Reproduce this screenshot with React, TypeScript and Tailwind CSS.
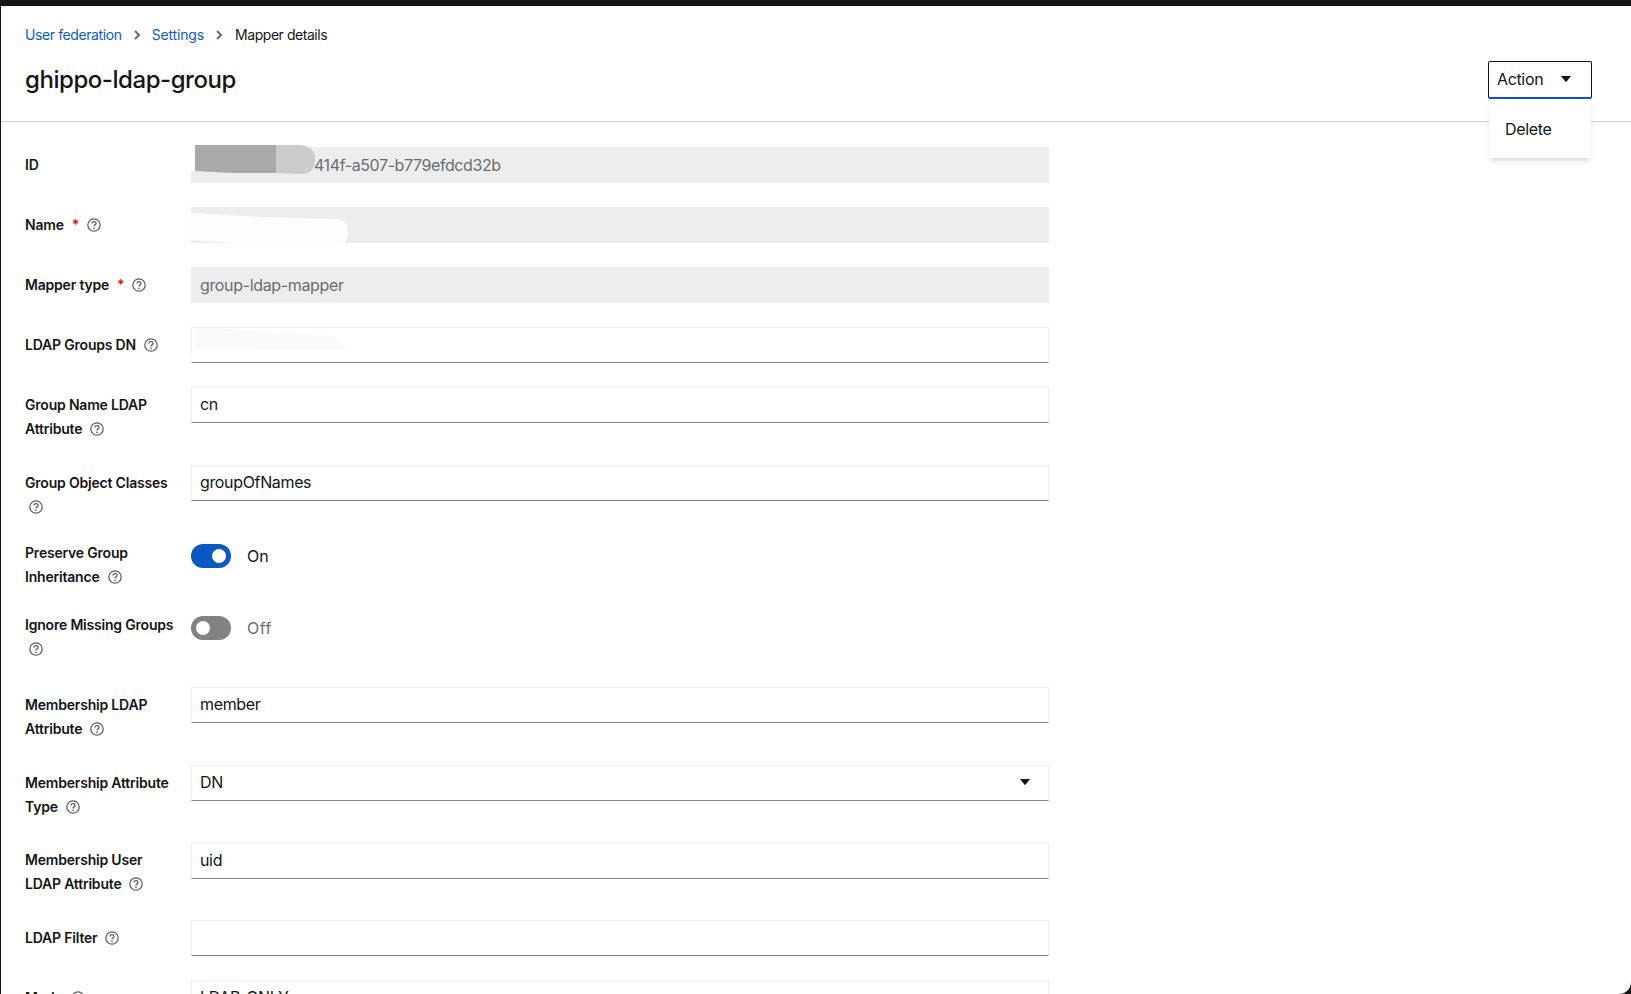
import React from "react";

const Help = () => (
  <svg viewBox="0 0 14 14" className="w-[14px] h-[14px] shrink-0 text-[#5f6266]" fill="none" stroke="currentColor">
    <circle cx="7" cy="7" r="6.2" strokeWidth="1.3" />
    <path d="M5 5.6c0-1.2.9-1.9 2-1.9s2 .7 2 1.8c0 1.4-2 1.4-2 2.9" strokeWidth="1.3" />
    <circle cx="7" cy="10.3" r=".85" fill="currentColor" stroke="none" />
  </svg>
);

const Caret = () => (
  <svg viewBox="0 0 10 6" className="w-[10px] h-[6px]" fill="#151515">
    <path d="M0 0h10L5.6 5.6a.8.8 0 0 1-1.2 0z" />
  </svg>
);

const Chevron = () => (
  <svg viewBox="0 0 6 10" className="w-[6px] h-[10px]" fill="none" stroke="#6a6e73" strokeWidth="2">
    <path d="M1 1l4 4-4 4" />
  </svg>
);

function Label({ lines, required, iconBelow, noHelp }: { lines: string[]; required?: boolean; iconBelow?: boolean; noHelp?: boolean }) {
  return (
    <div className="text-[14px] leading-6 font-semibold tracking-[-0.2px] text-[#151515]">
      {lines.map((l, i) => (
        <div key={i} className="flex items-center whitespace-nowrap">
          <span>{l}</span>
          {i === lines.length - 1 && required && <span className="ml-2 text-[#c9190b]">*</span>}
          {i === lines.length - 1 && !iconBelow && !noHelp && (
            <span className="ml-2 flex">
              <Help />
            </span>
          )}
        </div>
      ))}
      {iconBelow && (
        <div className="flex h-6 items-center pl-[4px]">
          <Help />
        </div>
      )}
    </div>
  );
}

function Row({ label, children, tight, className }: { label: React.ReactNode; children: React.ReactNode; tight?: boolean; className?: string }) {
  return (
    <div className={`grid grid-cols-[150px_858px] gap-x-4 ${className ?? ""}`}>
      <div className={tight ? "-mt-[3px] mb-[3px]" : "pt-[6px]"}>{label}</div>
      <div>{children}</div>
    </div>
  );
}

function Input({ value, disabled, children }: { value?: string; disabled?: boolean; children?: React.ReactNode }) {
  return (
    <div
      className={
        disabled
          ? "relative h-9 bg-[#ededed] px-[9px] text-[16px] leading-9 tracking-[-0.35px] text-[#6a6e73]"
          : "relative h-9 border border-[#efefef] border-b-[#808286] bg-white px-2 text-[16px] leading-[33px] tracking-[-0.35px] text-[#151515]"
      }
    >
      {children}
      {value}
    </div>
  );
}

function Toggle({ on }: { on: boolean }) {
  return (
    <div className="flex h-6 items-center gap-4">
      <div className={on ? "flex h-6 w-10 items-center justify-end rounded-full bg-[#0b57c4] px-[5px]" : "flex h-6 w-10 items-center rounded-full bg-[#808286] px-[5px]"}>
        <div className="h-[14px] w-[14px] rounded-full bg-white" />
      </div>
      <span className={on ? "text-[16px] text-[#151515]" : "text-[16px] tracking-[0.5px] text-[#6a6e73]"}>{on ? "On" : "Off"}</span>
    </div>
  );
}

export default function App() {
  return (
    <div className="h-[994px] w-[1631px] overflow-hidden bg-[#151515] font-['Inter','Noto_Sans',sans-serif]">
      <div className="relative mt-[6px] ml-px h-[988px] overflow-hidden rounded-br-xl bg-white">
        <div className="h-[116px] border-b border-[#d2d2d2] px-6 pt-[18px]">
          <div className="flex items-center text-[14px] leading-[21px]">
            <span className="tracking-[-0.4px] text-[#0b5cc8]">User federation</span>
            <span className="mx-[12px] flex">
              <Chevron />
            </span>
            <span className="tracking-[-0.15px] text-[#0b5cc8]">Settings</span>
            <span className="ml-[12px] mr-[13px] flex">
              <Chevron />
            </span>
            <span className="tracking-[-0.45px] text-[#151515]">Mapper details</span>
          </div>
          <div className="mt-[16px] flex items-center justify-between pr-[15px]">
            <h1 className="text-[24px] leading-9 font-medium tracking-[-0.45px] text-[#151515]">ghippo-ldap-group</h1>
            <div className="relative">
              <div className="flex h-[38px] w-[104px] items-center gap-[18px] rounded-[2px] border border-[#151515] border-b-2 border-b-[#0b57c4] pb-px pl-2 text-[16px] tracking-[-0.35px] text-[#151515]">
                Action
                <Caret />
              </div>
              <div className="absolute top-[38px] left-px z-10 h-[59px] w-[102px] bg-white pt-[18px] pl-4 text-[16px] leading-6 tracking-[-0.35px] text-[#151515] shadow-md">
                Delete
              </div>
            </div>
          </div>
        </div>

        <div className="flex flex-col gap-6 px-6 pt-[25px]">
          <Row label={<Label lines={["ID"]} noHelp />}>
            <div className="relative h-9 bg-[#ededed] pl-[123px] text-[16px] leading-9 tracking-[-0.4px] text-[#6a6e73]">
              <svg className="absolute -top-[3px] left-0 h-[34px] w-[130px]" viewBox="0 0 130 34">
                <path d="M0 3 L4 3 L4 27 L0 28z" fill="#ffffff" />
                <path d="M4 1 L85 1 L85 29 L40 29 L4 27z" fill="#a9a9a9" />
                <path d="M85 1 L110 1 Q124 3 124 15 Q124 30 110 30 L85 29z" fill="#cccccc" />
              </svg>
              414f-a507-b779efdcd32b
            </div>
          </Row>
          <Row label={<Label lines={["Name"]} required />}>
            <div className="relative h-9 bg-[#ededed]">
              <svg className="absolute top-0 left-0 h-9 w-[160px]" viewBox="0 0 160 36">
                <path d="M0 6 L6 6 L70 10 L145 12 Q157 13 157 24 Q157 36 150 36 L45 36 L0 33z" fill="#fdfdfd" />
              </svg>
            </div>
          </Row>
          <Row label={<Label lines={["Mapper type"]} required />}>
            <Input value="group-ldap-mapper" disabled />
          </Row>
          <Row label={<Label lines={["LDAP Groups DN"]} />}>
            <Input>
              <svg className="absolute -top-px -left-px h-9 w-[160px]" viewBox="0 0 160 36">
                <path d="M4 1 L30 1 L85 6 L135 8 Q152 12 156 22 L4 21z" fill="#fafafa" />
                <path d="M0 27 L130 24 L150 34 L0 34z" fill="#ffffff" />
              </svg>
            </Input>
          </Row>
          <Row label={<Label lines={["Group Name LDAP", "Attribute"]} />}>
            <Input value="cn" />
          </Row>
          <Row label={<Label lines={["Group Object Classes"]} iconBelow />}>
            <Input value="groupOfNames" />
          </Row>
          <Row tight className="mt-px" label={<Label lines={["Preserve Group", "Inheritance"]} />}>
            <Toggle on />
          </Row>
          <Row tight className="-mb-px" label={<Label lines={["Ignore Missing Groups"]} iconBelow />}>
            <Toggle on={false} />
          </Row>
          <Row label={<Label lines={["Membership LDAP", "Attribute"]} />}>
            <Input value="member" />
          </Row>
          <Row label={<Label lines={["Membership Attribute", "Type"]} />}>
            <div className="flex h-9 items-center justify-between border border-[#efefef] border-b-[#808286] bg-white pr-[18px] pb-[2px] pl-2 text-[16px] tracking-[-0.35px] text-[#151515]">
              DN
              <Caret />
            </div>
          </Row>
          <Row
            label={
              <div className="-mt-px">
                <Label lines={["Membership User", "LDAP Attribute"]} />
              </div>
            }
          >
            <Input value="uid" />
          </Row>
          <Row label={<Label lines={["LDAP Filter"]} />}>
            <Input />
          </Row>
          <Row label={<Label lines={["Mode"]} />}>
            <Input value="LDAP_ONLY" />
          </Row>
        </div>
      </div>
    </div>
  );
}
